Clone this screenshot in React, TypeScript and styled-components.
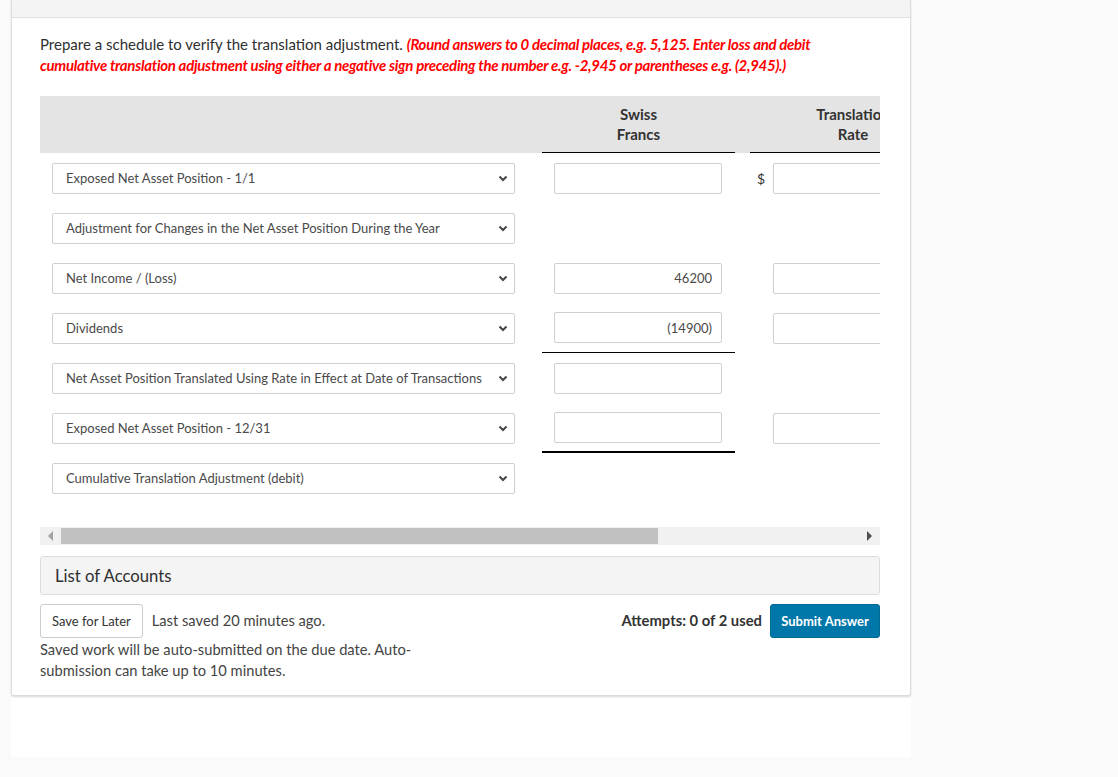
import styled, { createGlobalStyle } from 'styled-components';

const GlobalStyle = createGlobalStyle`
  html, body {
    margin: 0;
    padding: 0;
    background: #fafafa;
  }
  body {
    font-family: Lato, 'Open Sans', 'Liberation Sans', sans-serif;
    color: #333;
  }
  * {
    box-sizing: border-box;
  }
`;

type Rule = 'single' | 'double';

interface ScheduleRow {
  label: string;
  francs?: string;
  rate?: boolean;
  dollarSign?: boolean;
  rule?: Rule;
}

const rows: ScheduleRow[] = [
  { label: 'Exposed Net Asset Position - 1/1', francs: '', rate: true, dollarSign: true },
  { label: 'Adjustment for Changes in the Net Asset Position During the Year' },
  { label: 'Net Income / (Loss)', francs: '46200', rate: true },
  { label: 'Dividends', francs: '(14900)', rate: true, rule: 'single' },
  { label: 'Net Asset Position Translated Using Rate in Effect at Date of Transactions', francs: '' },
  { label: 'Exposed Net Asset Position - 12/31', francs: '', rate: true, rule: 'double' },
  { label: 'Cumulative Translation Adjustment (debit)' },
];

const COLUMNS = '487px 193px 206px 191px';

const Page = styled.div`
  padding-left: 11px;
  width: 911px;
`;

const Card = styled.div`
  width: 900px;
  background: #fff;
  border: 1px solid #dcdcdc;
  border-top: none;
  border-radius: 0 0 3px 3px;
  box-shadow: 0 1px 2px rgba(0, 0, 0, 0.12);
`;

const TopBar = styled.div`
  height: 18px;
  background: #f4f4f4;
  border-bottom: 1px solid #e0e0e0;
`;

const Body = styled.div`
  padding: 16px 30px 14px 28px;
`;

const Prompt = styled.p`
  margin: 0;
  font-size: 15px;
  line-height: 21px;
  color: #2f2f2f;
`;

const Hint = styled.span`
  color: #ff0000;
  font-weight: 700;
  font-style: italic;
  letter-spacing: -0.3px;
`;

const TableScroller = styled.div`
  margin-top: 20px;
  width: 840px;
  overflow: hidden;
`;

const Table = styled.div`
  width: 1122px;
  padding-bottom: 24px;
`;

const HeaderRow = styled.div`
  display: grid;
  grid-template-columns: ${COLUMNS};
  column-gap: 15px;
  height: 57px;
  background: #e4e4e4;
`;

const HeaderCell = styled.div<{ $underline?: boolean }>`
  display: flex;
  align-items: flex-end;
  justify-content: center;
  padding-bottom: 8px;
  font-size: 15px;
  font-weight: 700;
  line-height: 20px;
  text-align: center;
  color: #333;
  border-bottom: ${(p) => (p.$underline ? '1px solid #000' : 'none')};
`;

const Row = styled.div`
  display: grid;
  grid-template-columns: ${COLUMNS};
  column-gap: 15px;
  height: 50px;
`;

const LabelCell = styled.div`
  display: flex;
  align-items: center;
  padding: 0 12px;
`;

const AmountCell = styled.div<{ $rule?: Rule }>`
  display: flex;
  align-items: center;
  padding: 0 13px 0 12px;
  border-bottom: ${(p) =>
    p.$rule === 'double' ? '2px solid #000' : p.$rule === 'single' ? '1px solid #000' : 'none'};
`;

const RateCell = styled.div`
  display: flex;
  align-items: center;
  padding: 0 12px 0 7px;
  gap: 8px;
`;

const Dollar = styled.span<{ $hidden?: boolean }>`
  width: 9px;
  font-size: 14px;
  color: #333;
  visibility: ${(p) => (p.$hidden ? 'hidden' : 'visible')};
`;

const SelectBox = styled.div`
  width: 100%;
  height: 31px;
  display: flex;
  align-items: center;
  justify-content: space-between;
  padding: 0 6px 0 13px;
  border: 1px solid #cfcfcf;
  border-radius: 2px;
  background: #fff;
  font-size: 13px;
  color: #4a4a4a;
  white-space: nowrap;
`;

const AmountInput = styled.input`
  width: 100%;
  height: 31px;
  padding: 0 9px;
  border: 1px solid #cfcfcf;
  border-radius: 2px;
  background: #fff;
  font-family: inherit;
  font-size: 13px;
  color: #4a4a4a;
  text-align: right;
  outline: none;
`;

const ScrollTrack = styled.div`
  display: flex;
  align-items: stretch;
  height: 18px;
  padding: 1px 0;
  background: #f1f1f1;
`;

const ScrollArrow = styled.div<{ $dir: 'left' | 'right'; $active?: boolean }>`
  width: 21px;
  display: flex;
  align-items: center;
  justify-content: center;

  &::before {
    content: '';
    width: 0;
    height: 0;
    border-top: 5px solid transparent;
    border-bottom: 5px solid transparent;
    ${(p) =>
      p.$dir === 'left'
        ? `border-right: 5px solid ${p.$active ? '#505050' : '#a3a3a3'};`
        : `border-left: 5px solid ${p.$active ? '#505050' : '#a3a3a3'};`}
  }
`;

const ScrollRail = styled.div`
  flex: 1;
  display: flex;
`;

const ScrollThumb = styled.div`
  background: #c1c1c1;
`;

const AccountsBar = styled.div`
  margin-top: 11px;
  height: 39px;
  display: flex;
  align-items: center;
  padding-left: 14px;
  background: #f4f4f4;
  border: 1px solid #dddddd;
  border-radius: 3px;
  font-size: 16.7px;
  color: #2f2f2f;
`;

const Footer = styled.div`
  margin-top: 9px;
  display: flex;
  justify-content: space-between;
  align-items: flex-start;
`;

const FooterLeft = styled.div`
  width: 420px;
`;

const SaveRow = styled.div`
  display: flex;
  align-items: center;
  gap: 9px;
`;

const SaveButton = styled.button`
  height: 34px;
  padding: 0 11px;
  background: #fff;
  border: 1px solid #cccccc;
  border-radius: 3px;
  font-family: inherit;
  font-size: 13px;
  color: #333;
`;

const SavedText = styled.span`
  font-size: 14.7px;
  color: #444;
  margin-top: -3px;
`;

const Note = styled.p`
  margin: 1px 0 0;
  font-size: 14.7px;
  line-height: 21px;
  color: #444;
`;

const FooterRight = styled.div`
  display: flex;
  align-items: center;
  gap: 8px;
`;

const Attempts = styled.span`
  font-size: 14.8px;
  font-weight: 700;
  color: #333;
  margin-top: -3px;
`;

const SubmitButton = styled.button`
  height: 34px;
  width: 110px;
  background: #0077a9;
  border: 1px solid #006894;
  border-radius: 3px;
  font-family: inherit;
  font-size: 13px;
  font-weight: 700;
  color: #fff;
`;

const BelowStrip = styled.div`
  margin-top: 2px;
  width: 900px;
  height: 59px;
  background: #fff;
`;

const Chevron = () => (
  <svg width="10" height="7" viewBox="0 0 10 7" aria-hidden="true">
    <polyline points="1.5,1.5 5,5 8.5,1.5" fill="none" stroke="#444" strokeWidth="2" />
  </svg>
);

export default function App() {
  return (
    <>
      <GlobalStyle />
      <Page>
        <Card>
          <TopBar />
          <Body>
            <Prompt>
              Prepare a schedule to verify the translation adjustment.{' '}
              <Hint>
                (Round answers to 0 decimal places, e.g. 5,125. Enter loss and debit cumulative
                translation adjustment using either a negative sign preceding the number e.g.
                -2,945 or parentheses e.g. (2,945).)
              </Hint>
            </Prompt>

            <TableScroller>
              <Table>
                <HeaderRow>
                  <HeaderCell />
                  <HeaderCell $underline>
                    Swiss
                    <br />
                    Francs
                  </HeaderCell>
                  <HeaderCell $underline>
                    Translation
                    <br />
                    Rate
                  </HeaderCell>
                  <HeaderCell $underline>
                    U.S.
                    <br />
                    Dollars
                  </HeaderCell>
                </HeaderRow>
                {rows.map((row) => (
                  <Row key={row.label}>
                    <LabelCell>
                      <SelectBox>
                        <span>{row.label}</span>
                        <Chevron />
                      </SelectBox>
                    </LabelCell>
                    <AmountCell $rule={row.rule}>
                      {row.francs !== undefined && <AmountInput readOnly value={row.francs} />}
                    </AmountCell>
                    <RateCell>
                      {row.rate && (
                        <>
                          <Dollar $hidden={!row.dollarSign}>$</Dollar>
                          <AmountInput readOnly value="" />
                        </>
                      )}
                    </RateCell>
                    <RateCell>
                      {row.rate && (
                        <>
                          <Dollar $hidden={!row.dollarSign}>$</Dollar>
                          <AmountInput readOnly value="" />
                        </>
                      )}
                    </RateCell>
                  </Row>
                ))}
              </Table>
            </TableScroller>

            <ScrollTrack>
              <ScrollArrow $dir="left" />
              <ScrollRail>
                <ScrollThumb style={{ width: `${(840 / 1122) * 100}%` }} />
              </ScrollRail>
              <ScrollArrow $dir="right" $active />
            </ScrollTrack>

            <AccountsBar>List of Accounts</AccountsBar>

            <Footer>
              <FooterLeft>
                <SaveRow>
                  <SaveButton>Save for Later</SaveButton>
                  <SavedText>Last saved 20 minutes ago.</SavedText>
                </SaveRow>
                <Note>
                  Saved work will be auto-submitted on the due date. Auto-submission can take up
                  to 10 minutes.
                </Note>
              </FooterLeft>
              <FooterRight>
                <Attempts>Attempts: 0 of 2 used</Attempts>
                <SubmitButton>Submit Answer</SubmitButton>
              </FooterRight>
            </Footer>
          </Body>
        </Card>
        <BelowStrip />
      </Page>
    </>
  );
}
